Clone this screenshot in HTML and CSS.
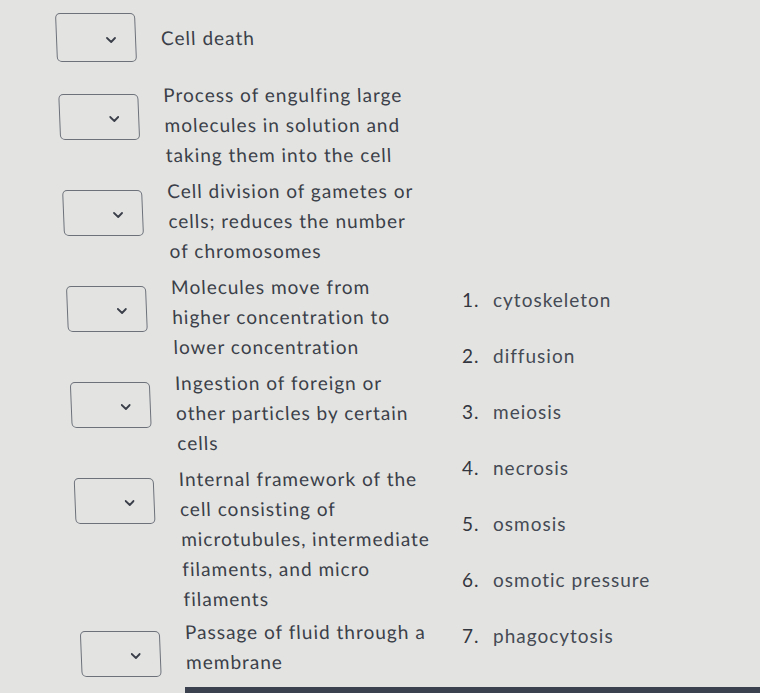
FILE: index.html
```html
<!DOCTYPE html>
<html lang="en">
<head>
  <meta charset="UTF-8" />
  <meta name="viewport" content="width=device-width, initial-scale=1.0"/>
  <title>Matching</title>
  <link rel="stylesheet" href="styles.css">
</head>
<body>
  <div class="quiz">
    <!-- left side: a dropdown for each definition -->
    <div class="pairs">
      <div class="pair single">
        <div class="pick"><svg class="chev" viewBox="0 0 10 6"><polyline points="1,1 5,5 9,1"/></svg></div>
        <div class="term">Cell death</div>
      </div>
      <div class="pair">
        <div class="pick"><svg class="chev" viewBox="0 0 10 6"><polyline points="1,1 5,5 9,1"/></svg></div>
        <div class="term">Process of engulfing large molecules in solution and taking them into the cell</div>
      </div>
      <div class="pair">
        <div class="pick"><svg class="chev" viewBox="0 0 10 6"><polyline points="1,1 5,5 9,1"/></svg></div>
        <div class="term">Cell division of gametes or cells; reduces the number of chromosomes</div>
      </div>
      <div class="pair">
        <div class="pick"><svg class="chev" viewBox="0 0 10 6"><polyline points="1,1 5,5 9,1"/></svg></div>
        <div class="term">Molecules move from higher concentration to lower concentration</div>
      </div>
      <div class="pair">
        <div class="pick"><svg class="chev" viewBox="0 0 10 6"><polyline points="1,1 5,5 9,1"/></svg></div>
        <div class="term">Ingestion of foreign or other particles by certain cells</div>
      </div>
      <div class="pair">
        <div class="pick"><svg class="chev" viewBox="0 0 10 6"><polyline points="1,1 5,5 9,1"/></svg></div>
        <div class="term">Internal framework of the cell consisting of microtubules, intermediate filaments, and micro filaments</div>
      </div>
      <div class="pair">
        <div class="pick"><svg class="chev" viewBox="0 0 10 6"><polyline points="1,1 5,5 9,1"/></svg></div>
        <div class="term">Passage of fluid through a membrane</div>
      </div>
    </div>

    <!-- right side: the answer bank -->
    <ol class="answers">
      <li><span class="num">1.</span>cytoskeleton</li>
      <li><span class="num">2.</span>diffusion</li>
      <li><span class="num">3.</span>meiosis</li>
      <li><span class="num">4.</span>necrosis</li>
      <li><span class="num">5.</span>osmosis</li>
      <li><span class="num">6.</span>osmotic pressure</li>
      <li><span class="num">7.</span>phagocytosis</li>
    </ol>
  </div>
  <div class="edge"></div>
</body>
</html>
```

FILE: styles.css
```css
html, body {
  height: 100%;
}

body {
  font-family: Lato, 'Open Sans', sans-serif;
  font-size: 19px;
  letter-spacing: 1px;
  background: #e3e4e2;
  color: #3b3f49;
  margin: 0;
  overflow: hidden;
  position: relative;
}

.quiz {
  display: flex;
  padding: 13px 0 0 55px;
}

.pairs {
  width: 405px;
  transform: skewX(2.3deg);
  transform-origin: top left;
}

.pair {
  display: flex;
  align-items: flex-start;
  gap: 25px;
  margin-bottom: 6px;
}

.pair.single {
  align-items: center;
  margin-bottom: 18px;
}

.pair:last-child {
  margin-top: -3px;
}

.pick {
  flex: none;
  width: 80px;
  height: 46px;
  margin-top: 14px;
  border: 1.5px solid #6d717a;
  border-radius: 5px;
  box-sizing: border-box;
  position: relative;
}

.pair.single .pick {
  height: 49px;
  margin-top: 0;
}

.chev {
  position: absolute;
  right: 19px;
  top: 50%;
  width: 10px;
  height: 6px;
  margin-top: -1px;
  fill: none;
  stroke: #3b3f49;
  stroke-width: 1.8;
  stroke-linecap: round;
  stroke-linejoin: round;
}

.term {
  width: 254px;
  line-height: 30px;
}

.answers {
  list-style: none;
  margin: 272px 0 0 0;
  padding: 0 0 0 2px;
  color: #454a54;
}

.answers li {
  display: flex;
  line-height: 30px;
  margin-bottom: 26px;
}

.answers .num {
  width: 31px;
  color: #33363e;
}

.edge {
  position: absolute;
  left: 185px;
  right: 0;
  bottom: 0;
  height: 6px;
  background: #3c4150;
}
```
